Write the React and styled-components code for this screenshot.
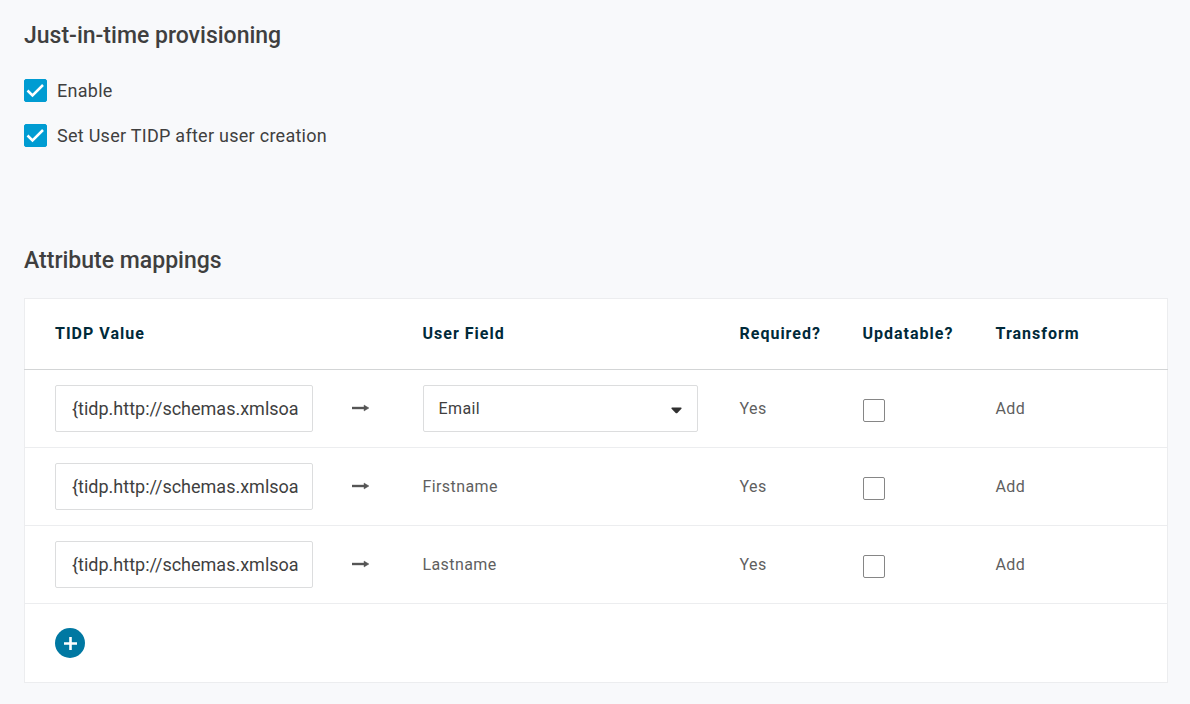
import React from 'react'
import styled, { createGlobalStyle } from 'styled-components';

const mappings = [
    { id: 'email', field: 'Email', editable: true },
    { id: 'firstname', field: 'Firstname' },
    { id: 'lastname', field: 'Lastname' },
];

const TIDP_VALUE = '{tidp.http://schemas.xmlsoap.org/ws/2005/05/identity/claims/emailaddress}';

const Arrow = () => (
    <ArrowIcon width="18" height="10" viewBox="0 0 18 10" aria-hidden="true">
        <path d="M0 3h12V1l5 3-5 3V5H0z" fill="currentColor" stroke="currentColor" strokeWidth=".4" />
    </ArrowIcon>
)

const Option = ({ id, label }) => (
    <OptionRow>
        <CheckBox type="checkbox" id={id} defaultChecked />
        <OptionLabel htmlFor={id}>{label}</OptionLabel>
    </OptionRow>
)

const MappingRow = ({ id, field, editable }) => (
    <Row>
        <Cell>
            <TextInput id={`${id}-value`} aria-label={`TIDP value for ${field}`} defaultValue={TIDP_VALUE} />
        </Cell>
        <Cell><Arrow /></Cell>
        <Cell>
            {editable ? (
                <SelectWrap>
                    <Select aria-label="User field" defaultValue={field}>
                        <option>Email</option>
                        <option>Username</option>
                    </Select>
                    <Caret width="11" height="7" viewBox="0 0 11 7" aria-hidden="true">
                        <path d="M1 .5h9q1 .5.4 1.3L6.4 5.9q-.9.8-1.8 0L.6 1.8Q0 1 1 .5z" fill="currentColor" />
                    </Caret>
                </SelectWrap>
            ) : field}
        </Cell>
        <Cell>Yes</Cell>
        <Cell>
            <CheckBox type="checkbox" id={`${id}-updatable`} aria-label={`${field} updatable`} $inTable />
        </Cell>
        <Cell>Add</Cell>
    </Row>
)

class App extends React.Component {
    render() {
        return (
            <Page>
                <GlobalStyle />
                <Title>Just-in-time provisioning</Title>
                <Options>
                    <Option id="enable" label="Enable" />
                    <Option id="set-tidp" label="Set User TIDP after user creation" />
                </Options>
                <Title>Attribute mappings</Title>
                <Table>
                    <colgroup>
                        <Col $width={327} />
                        <Col $width={71} />
                        <Col $width={317} />
                        <Col $width={123} />
                        <Col $width={133} />
                        <Col $width={172} />
                    </colgroup>
                    <thead>
                        <HeadRow>
                            <HeadCell>TIDP Value</HeadCell>
                            <HeadCell />
                            <HeadCell>User Field</HeadCell>
                            <HeadCell>Required?</HeadCell>
                            <HeadCell>Updatable?</HeadCell>
                            <HeadCell>Transform</HeadCell>
                        </HeadRow>
                    </thead>
                    <tbody>
                        {mappings.map((m) => <MappingRow key={m.id} {...m} />)}
                        <Row>
                            <AddCell colSpan={6}>
                                <AddButton type="button" aria-label="Add mapping">
                                    <svg width="14" height="14" viewBox="0 0 14 14" aria-hidden="true">
                                        <path d="M7.500 1v13M1 7.500h13" stroke="currentColor" strokeWidth="2.600" />
                                    </svg>
                                </AddButton>
                            </AddCell>
                        </Row>
                    </tbody>
                </Table>
            </Page>
        )
    }
}

export default App

const GlobalStyle = createGlobalStyle`
    * {
        box-sizing: border-box;
    }
    body {
        margin: 0;
        background-color: #F8F9FB;
        color: #3F3F3F;
        font-family: Roboto, "Liberation Sans", sans-serif;
    }
`
const Page = styled.main`
    padding: 21px 22px 20px 24px;
`
const Title = styled.h2`
    margin: 0;
    font-size: 23px;
    line-height: 30px;
    font-weight: 500;
`
const Options = styled.div`
    display: flex;
    flex-direction: column;
    gap: 20px;
    padding: 27px 0 98px;
`
const OptionRow = styled.div`
    display: flex;
    align-items: center;
    gap: 10px;
`
const OptionLabel = styled.label`
    font-size: 18px;
    line-height: 25px;
    letter-spacing: 0.015em;
`
const CheckBox = styled.input`
    appearance: none;
    display: block;
    flex: none;
    width: ${({ $inTable }) => ($inTable ? 22 : 23)}px;
    height: 23px;
    margin: ${({ $inTable }) => ($inTable ? '4px 0 0' : '0')};
    border: 1px solid #868686;
    border-radius: 2px;
    background-color: #FFFFFF;

    &:checked {
        border-color: #009CD2;
        background: #009CD2 url("data:image/svg+xml,%3Csvg xmlns='http://www.w3.org/2000/svg' viewBox='0 0 21 21'%3E%3Cpath d='M2.500 10.500l5 5L18 5' fill='none' stroke='white' stroke-width='2.500'/%3E%3C/svg%3E") center / 21px no-repeat;
    }
`
const Table = styled.table`
    width: 100%;
    margin-top: 22px;
    table-layout: fixed;
    border-collapse: collapse;
    border: 1px solid #ECEDEF;
    background-color: #FFFFFF;
`
const Col = styled.col`
    width: ${({ $width }) => $width}px;
`
const HeadRow = styled.tr`
    border-bottom: 1px solid #D3D5D6;
`
const HeadCell = styled.th`
    height: 71px;
    padding: 0;
    text-align: left;
    font-size: 16px;
    line-height: 20px;
    font-weight: 700;
    letter-spacing: 1px;
    color: #002A3A;

    &:first-child {
        padding-left: 30px;
    }
`
const Row = styled.tr`
    border-bottom: 1px solid #ECEDEF;
`
const Cell = styled.td`
    padding: 15px 0;
    font-size: 16px;
    line-height: 20px;
    letter-spacing: 0.025em;
    color: #5F5F5F;

    &:first-child {
        padding-left: 30px;
        padding-right: 39px;
    }
    &:nth-child(3) {
        padding-right: 42px;
    }
`
const TextInput = styled.input`
    display: block;
    width: 100%;
    height: 47px;
    padding: 0 14px 0 16px;
    border: 1px solid #DCDDDE;
    border-radius: 2px;
    background-color: #FFFFFF;
    color: #3F3F3F;
    font: 400 18px Roboto, sans-serif;
`
const SelectWrap = styled.div`
    position: relative;
`
const Select = styled.select`
    appearance: none;
    display: block;
    width: 100%;
    height: 47px;
    padding: 0 40px 0 15px;
    border: 1px solid #DCDDDE;
    border-radius: 2px;
    background-color: #FFFFFF;
    color: #3F3F3F;
    font: 400 16px Roboto, sans-serif;
    letter-spacing: 0.025em;
`
const Caret = styled.svg`
    position: absolute;
    top: 22px;
    right: 16px;
    color: #303030;
    pointer-events: none;
`
const ArrowIcon = styled.svg`
    display: block;
    color: #555555;
`
const AddCell = styled.td`
    padding: 24px 30px;
`
const AddButton = styled.button`
    display: flex;
    align-items: center;
    justify-content: center;
    width: 30px;
    height: 30px;
    padding: 0;
    border: none;
    border-radius: 50%;
    background-color: #0078A2;
    color: #FFFFFF;
`
